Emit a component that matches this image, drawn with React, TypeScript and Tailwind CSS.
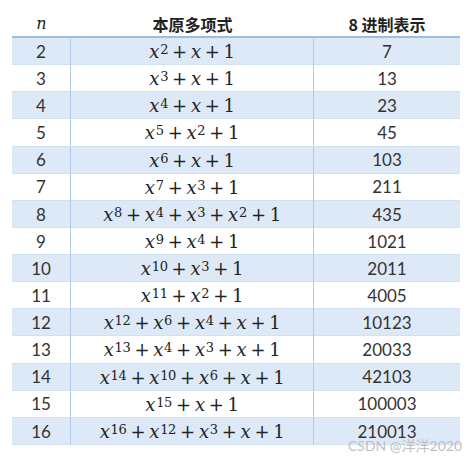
import React from 'react';

const rows: [number, string[], string][] = [
  [2, ['2', '1', '0'], '7'],
  [3, ['3', '1', '0'], '13'],
  [4, ['4', '1', '0'], '23'],
  [5, ['5', '2', '0'], '45'],
  [6, ['6', '1', '0'], '103'],
  [7, ['7', '3', '0'], '211'],
  [8, ['8', '4', '3', '2', '0'], '435'],
  [9, ['9', '4', '0'], '1021'],
  [10, ['10', '3', '0'], '2011'],
  [11, ['11', '2', '0'], '4005'],
  [12, ['12', '6', '4', '1', '0'], '10123'],
  [13, ['13', '4', '3', '1', '0'], '20033'],
  [14, ['14', '10', '6', '1', '0'], '42103'],
  [15, ['15', '1', '0'], '100003'],
  [16, ['16', '12', '3', '1', '0'], '210013'],
];

function Term({ p }: { p: string }) {
  if (p === '0') return <span>1</span>;
  if (p === '1') return <i>x</i>;
  return (
    <span>
      <i>x</i>
      <sup className="text-[13px] relative -top-[4px] ml-[1px]">{p}</sup>
    </span>
  );
}

function Poly({ terms }: { terms: string[] }) {
  return (
    <span className="font-['DejaVu_Serif',serif] text-[18px] text-[#222] whitespace-nowrap tracking-[-0.3px]">
      {terms.map((p, i) => (
        <React.Fragment key={i}>
          {i > 0 && <span className="mx-[4px]">+</span>}
          <Term p={p} />
        </React.Fragment>
      ))}
    </span>
  );
}

export default function App() {
  return (
    <div className="w-[474px] h-[460px] bg-white relative font-['Lato','Noto_Sans_CJK_SC',sans-serif]">
      <div className="pt-[12px] pl-[12px] w-[460px]">
        <div className="grid grid-cols-[59px_243px_146px] h-[26px] items-center border-b-2 border-[#9dbde2] text-[#222]">
          <div className="text-center font-['DejaVu_Serif',serif] italic text-[16px]">n</div>
          <div className="text-center font-bold text-[16px] font-['Noto_Sans_CJK_SC',sans-serif]">本原多项式</div>
          <div className="text-center font-bold text-[16px] font-['Noto_Sans_CJK_SC',sans-serif]">8 进制表示</div>
        </div>
        {rows.map(([n, terms, oct], i) => (
          <div
            key={n}
            className={`grid grid-cols-[59px_243px_146px] h-[27.13px] items-center border-b border-[#d2e1f2] ${i % 2 === 0 ? 'bg-[#dde9f7]' : 'bg-white'}`}
          >
            <div className="text-center text-[17px] text-[#333] h-full flex items-center justify-center border-r border-[#b3cbe7]">{n}</div>
            <div className="text-center h-full flex items-center justify-center border-r border-[#b3cbe7]">
              <Poly terms={terms} />
            </div>
            <div className="text-center text-[17px] text-[#333]">{oct}</div>
          </div>
        ))}
      </div>
      <div className="absolute right-[12px] bottom-[4px] text-[14px] text-[#b8b8b8]/90">CSDN @洋洋2020</div>
    </div>
  );
}
